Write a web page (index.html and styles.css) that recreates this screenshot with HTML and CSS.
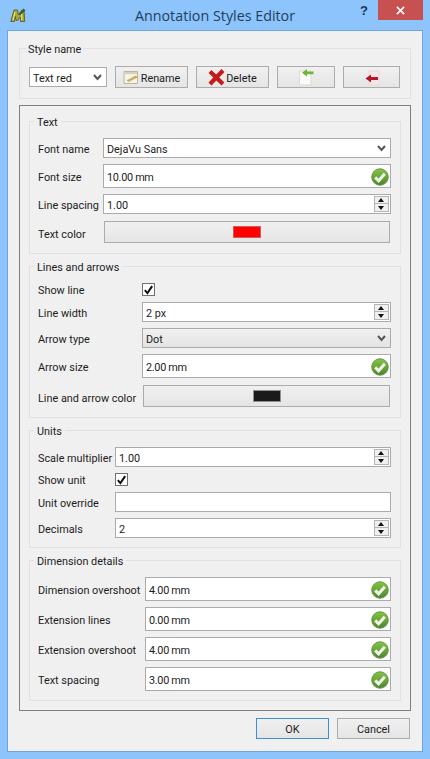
FILE: index.html
```html
<!DOCTYPE html>
<html lang="en">
<head>
<meta charset="utf-8">
<title>Annotation Styles Editor</title>
<link rel="stylesheet" href="styles.css">
</head>
<body>
<svg class="defs" width="0" height="0" aria-hidden="true">
  <defs>
    <linearGradient id="gc" x1="0" y1="0" x2="0" y2="1">
      <stop offset="0" stop-color="#86c344"/>
      <stop offset="0.55" stop-color="#66a436"/>
      <stop offset="1" stop-color="#4f8233"/>
    </linearGradient>
    <symbol id="ok" viewBox="0 0 18 18">
      <circle cx="9" cy="9" r="8.3" fill="url(#gc)" stroke="#5c8a44" stroke-width="0.8"/>
      <path d="M4.2 9.4 L7.6 12.8 L13.8 5.8" fill="none" stroke="#f2f7ec" stroke-width="3"/>
    </symbol>
    <symbol id="chev" viewBox="0 0 9 7">
      <path d="M1 1 L4.5 5 L8 1" fill="none" stroke="#555" stroke-width="2"/>
    </symbol>
    <symbol id="tick" viewBox="0 0 12 12">
      <path d="M2 6.2 L4.8 9.4 L10 1.8" fill="none" stroke="#111" stroke-width="2.2"/>
    </symbol>
  </defs>
</svg>
<div class="window">
  <header class="titlebar">
    <svg class="logo" viewBox="0 0 16 16" width="16" height="16">
      <path d="M0.8 14.5 L4 3 L7.6 3 L8.4 8 L12 3 L14 4 L14.8 14.5 L10.6 14.5 L10.2 10 L7.6 13.5 L6 13.5 L5.4 9.5 L4.4 14.5 Z" fill="#a6a83a" stroke="#5e5e22" stroke-width="0.9"/>
      <path d="M8.5 7 L13.5 1.5 L15.5 3.5 L10 8.5 Z" fill="#46602a"/>
      <path d="M3 13 L5 5 M11.8 13 L11.6 7" stroke="#efe88c" stroke-width="1"/>
    </svg>
    <h1 class="title">Annotation Styles Editor</h1>
    <span class="help">?</span>
    <span class="close">
      <svg viewBox="0 0 10 10" width="9" height="9"><path d="M1 1 L9 9 M9 1 L1 9" stroke="#fff" stroke-width="1.8"/></svg>
    </span>
  </header>
  <main class="client">
    <section class="group style-group">
      <div class="legend">Style name</div>
      <div class="style-row">
        <div class="field combo style-combo"><span>Text red</span><svg class="chev" width="9" height="7"><use href="#chev"/></svg></div>
        <div class="btn w73">
          <svg class="btn-ico" viewBox="0 0 17 16" width="17" height="16">
            <path d="M1 2.5 H14.5 V14.5 H1 Z" fill="#f5f3e8" stroke="#b7b5a6" stroke-width="1"/>
            <path d="M1.5 3 H14 V5 H1.5 Z" fill="#d9d0b0"/>
            <path d="M4 11.5 L12.5 7 L14.5 8 L6 12.5 Z" fill="#d9b04a" stroke="#9a8a4a" stroke-width="0.4"/>
          </svg>
          <span>Rename</span>
        </div>
        <div class="btn w73 del">
          <svg class="btn-ico" viewBox="0 0 17 17" width="17" height="17">
            <path d="M2 2.5 L15 15 M15 1.5 L2 15" stroke="#c41a1a" stroke-width="4.2"/>
          </svg>
          <span>Delete</span>
        </div>
        <div class="btn w58">
          <svg viewBox="0 0 16 18" width="16" height="18">
            <path d="M1.5 3 H13 V17 H1.5 Z" fill="#fbfbf6" stroke="#dcdcd4" stroke-width="1"/>
            <path d="M15.5 3.5 H9 V1 L4 4.8 L9 8.6 V6.2 H15.5 Z" fill="#6cb33f"/>
          </svg>
        </div>
        <div class="btn w57">
          <svg viewBox="0 0 16 17" width="16" height="17">
            <path d="M5 2 H15 V16 H5 Z" fill="#f6e7e7" stroke="#ecd8d8" stroke-width="1"/>
            <path d="M14 8 H7 V5.5 L1.5 9.5 L7 13.5 V11 H14 Z" fill="#b3162b"/>
          </svg>
        </div>
      </div>
    </section>

    <section class="frame">
      <section class="group inner">
        <div class="legend">Text</div>
        <div class="grid cols-text">
          <label>Font name</label>
          <div class="field combo h20"><span>DejaVu Sans</span><svg class="chev" width="9" height="7"><use href="#chev"/></svg></div>
          <label>Font size</label>
          <div class="field h24"><span>10.00 mm</span><svg class="ok" width="18" height="18"><use href="#ok"/></svg></div>
          <label>Line spacing</label>
          <div class="field h20"><span>1.00</span><div class="spin"><i class="up"></i><i class="down"></i></div></div>
          <label class="push">Text color</label>
          <div class="btn color push"><b class="swatch red"></b></div>
        </div>
      </section>

      <section class="group inner">
        <div class="legend">Lines and arrows</div>
        <div class="grid cols-lines">
          <label>Show line</label>
          <div class="check"><svg width="12" height="12"><use href="#tick"/></svg></div>
          <label>Line width</label>
          <div class="field h20"><span>2 px</span><div class="spin"><i class="up"></i><i class="down"></i></div></div>
          <label>Arrow type</label>
          <div class="field combo h20 ro"><span>Dot</span><svg class="chev" width="9" height="7"><use href="#chev"/></svg></div>
          <label>Arrow size</label>
          <div class="field h24"><span>2.00 mm</span><svg class="ok" width="18" height="18"><use href="#ok"/></svg></div>
          <label class="push">Line and arrow color</label>
          <div class="btn color push"><b class="swatch black"></b></div>
        </div>
      </section>

      <section class="group inner short">
        <div class="legend">Units</div>
        <div class="grid cols-units">
          <label>Scale multiplier</label>
          <div class="field h20"><span>1.00</span><div class="spin"><i class="up"></i><i class="down"></i></div></div>
          <label>Show unit</label>
          <div class="check"><svg width="12" height="12"><use href="#tick"/></svg></div>
          <label>Unit override</label>
          <div class="field h20"></div>
          <label>Decimals</label>
          <div class="field h20"><span>2</span><div class="spin"><i class="up"></i><i class="down"></i></div></div>
        </div>
      </section>

      <section class="group inner short">
        <div class="legend">Dimension details</div>
        <div class="grid cols-dim">
          <label>Dimension overshoot</label>
          <div class="field h24"><span>4.00 mm</span><svg class="ok" width="18" height="18"><use href="#ok"/></svg></div>
          <label>Extension lines</label>
          <div class="field h24"><span>0.00 mm</span><svg class="ok" width="18" height="18"><use href="#ok"/></svg></div>
          <label>Extension overshoot</label>
          <div class="field h24"><span>4.00 mm</span><svg class="ok" width="18" height="18"><use href="#ok"/></svg></div>
          <label>Text spacing</label>
          <div class="field h24"><span>3.00 mm</span><svg class="ok" width="18" height="18"><use href="#ok"/></svg></div>
        </div>
      </section>
    </section>

    <footer class="actions">
      <div class="btn action default"><span>OK</span></div>
      <div class="btn action"><span>Cancel</span></div>
    </footer>
  </main>
</div>
</body>
</html>
```

FILE: styles.css
```css
* { box-sizing: border-box; }
html, body { margin: 0; padding: 0; height: 100%; }
body {
  background: #8cc4fb;
  font-family: Roboto, "Open Sans", sans-serif;
  font-size: 10.85px;
  color: #1c1c1c;
  overflow: hidden;
}
.defs { position: absolute; }
.window { width: 430px; height: 759px; padding: 0 7px; display: flex; flex-direction: column; }

.titlebar { height: 30px; flex: none; display: flex; align-items: flex-start; position: relative; }
.logo { position: absolute; left: 3px; top: 7px; }
.title {
  margin: 6px 0 0;
  width: 100%;
  text-align: center;
  font-family: "Open Sans", sans-serif;
  font-size: 14.3px;
  line-height: 20px;
  font-weight: 400;
  color: #233f5e;
}
.help {
  position: absolute; left: 353px; top: 3px;
  font: 700 13px/16px "Liberation Sans", sans-serif;
  color: #17375c;
}
.close {
  position: absolute; left: 371px; top: 0; width: 45px; height: 20px;
  background: #c75050;
  display: flex; align-items: center; justify-content: center;
}

.client {
  flex: none;
  height: 722px;
  border: 1px solid #6ea6dc;
  background: #f0f0f0;
  padding: 17px 11px 0;
  display: flex; flex-direction: column;
}

.group { border: 1px solid #e1e1e1; padding: 0 9px 10px; }
.group.inner { padding-left: 8px; }
.group.short { padding-bottom: 9px; }
.legend {
  width: fit-content;
  height: 16px;
  line-height: 18px;
  margin: -8px 0 8px -4px;
  padding: 0 3px;
  background: #f0f0f0;
  white-space: nowrap;
}

.style-group { height: 51px; }
.style-group .legend { margin-left: -3px; margin-bottom: 9px; padding: 0 2px; }
.style-row { display: flex; gap: 8px; align-items: center; height: 22px; }
.style-combo { width: 78px; height: 20px; flex: none; }

.frame {
  margin-top: 6px;
  height: 606px;
  border: 1px solid #7f7f7f;
  padding: 15px 9px 9px;
  display: flex; flex-direction: column; gap: 12px;
}

.grid { display: grid; row-gap: 6px; align-items: center; }
.cols-text { grid-template-columns: 65px 1fr; }
.cols-lines { grid-template-columns: 104px 1fr; }
.cols-units { grid-template-columns: 77px 1fr; }
.cols-dim { grid-template-columns: 107px 1fr; }
label { white-space: nowrap; height: 13px; line-height: 15px; }
label.push { margin-top: 3px; }

.field {
  border: 1px solid #ababab;
  background: #fff;
  display: flex; align-items: center; justify-content: space-between;
  padding: 0 1px 0 3px;
  min-width: 0;
  white-space: nowrap;
}
.field span, .btn span { margin-top: 2px; }
.h20 { height: 20px; }
.h24 { height: 24px; }
.h24 span { letter-spacing: -0.3px; }
.ok { flex: none; margin-top: 2px; }
.combo { padding-right: 4px; }
.chev { flex: none; }
.ro { background: linear-gradient(#f1f1f1, #e3e3e3); }

.spin { width: 15px; height: 16px; display: flex; flex-direction: column; flex: none; }
.spin i {
  display: block; height: 8px; width: 15px; position: relative;
  background: #f0f0f0; border: 1px solid #b5b5b5;
}
.spin i + i { border-top: 0; }
.spin i::after {
  content: ""; position: absolute; left: 3px; top: 1px;
  border-left: 3.5px solid transparent; border-right: 3.5px solid transparent;
}
.spin .up::after { border-bottom: 4px solid #111; }
.spin .down::after { border-top: 4px solid #111; top: 2px; }

.check {
  width: 13px; height: 13px;
  border: 1px solid #707070;
  background: #fff;
  display: flex; align-items: center; justify-content: center;
}

.btn {
  height: 22px;
  border: 1px solid #acacac;
  background: linear-gradient(#f0f0f0, #e5e5e5);
  display: flex; align-items: center; justify-content: center;
  flex: none;
}
.w73 { width: 73px; }
.w58 { width: 58px; }
.w57 { width: 57px; }
.btn-ico { flex: none; margin-right: 1px; }

.color { margin: 0 1px; }
.color.push { margin-top: 1px; }
.swatch { display: block; width: 28px; height: 12px; border: 1px solid #a8a8a8; }
.red { background: #ff0000; border-color: #d65a5a; }
.black { background: #1a1a1a; border-color: #8f8f8f; }

.actions { display: flex; justify-content: flex-end; gap: 8px; margin: 7px 1px 0 0; }
.action { width: 73px; height: 21px; }
.default { border-color: #3f8fd6; }
```
